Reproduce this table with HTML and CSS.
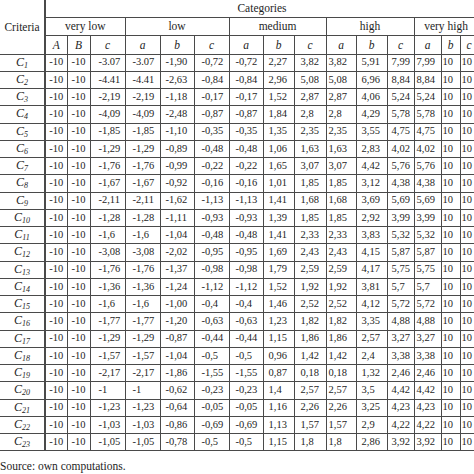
FILE: index.html
```html
<!DOCTYPE html>
<html>
<head>
<meta charset="utf-8">
<link rel="stylesheet" href="styles.css">
</head>
<body>
<div class="page">
<table class="grid">
<colgroup>
<col class="w45"><col class="w22"><col class="w23"><col class="w35"><col class="w35"><col class="w34"><col class="w35"><col class="w34"><col class="w31"><col class="w32"><col class="w30"><col class="w31"><col class="w27"><col class="w27"><col class="w19"><col class="w18">
</colgroup>
<thead>
<tr class="h1"><th rowspan="3" class="crit">Criteria</th><th colspan="15" class="cat">Categories</th></tr>
<tr class="h2"><th colspan="3">very low</th><th colspan="3">low</th><th colspan="3">medium</th><th colspan="3">high</th><th colspan="3">very high</th></tr>
<tr class="h3"><th>A</th><th>B</th><th>c</th><th>a</th><th>b</th><th>c</th><th>a</th><th>b</th><th>c</th><th>a</th><th>b</th><th>c</th><th>a</th><th>b</th><th>c</th></tr>
</thead>
<tbody>
<tr><th>C<sub>1</sub></th><td>-10</td><td>-10</td><td>-3.07</td><td>-3.07</td><td>-1,90</td><td>-0,72</td><td>-0,72</td><td>2,27</td><td>3,82</td><td>3,82</td><td>5,91</td><td>7,99</td><td>7,99</td><td>10</td><td>10</td></tr>
<tr><th>C<sub>2</sub></th><td>-10</td><td>-10</td><td>-4.41</td><td>-4.41</td><td>-2,63</td><td>-0,84</td><td>-0,84</td><td>2,96</td><td>5,08</td><td>5,08</td><td>6,96</td><td>8,84</td><td>8,84</td><td>10</td><td>10</td></tr>
<tr><th>C<sub>3</sub></th><td>-10</td><td>-10</td><td>-2,19</td><td>-2,19</td><td>-1,18</td><td>-0,17</td><td>-0,17</td><td>1,52</td><td>2,87</td><td>2,87</td><td>4,06</td><td>5,24</td><td>5,24</td><td>10</td><td>10</td></tr>
<tr><th>C<sub>4</sub></th><td>-10</td><td>-10</td><td>-4,09</td><td>-4,09</td><td>-2,48</td><td>-0,87</td><td>-0,87</td><td>1,84</td><td>2,8</td><td>2,8</td><td>4,29</td><td>5,78</td><td>5,78</td><td>10</td><td>10</td></tr>
<tr><th>C<sub>5</sub></th><td>-10</td><td>-10</td><td>-1,85</td><td>-1,85</td><td>-1,10</td><td>-0,35</td><td>-0,35</td><td>1,35</td><td>2,35</td><td>2,35</td><td>3,55</td><td>4,75</td><td>4,75</td><td>10</td><td>10</td></tr>
<tr><th>C<sub>6</sub></th><td>-10</td><td>-10</td><td>-1,29</td><td>-1,29</td><td>-0,89</td><td>-0,48</td><td>-0,48</td><td>1,06</td><td>1,63</td><td>1,63</td><td>2,83</td><td>4,02</td><td>4,02</td><td>10</td><td>10</td></tr>
<tr><th>C<sub>7</sub></th><td>-10</td><td>-10</td><td>-1,76</td><td>-1,76</td><td>-0,99</td><td>-0,22</td><td>-0,22</td><td>1,65</td><td>3,07</td><td>3,07</td><td>4,42</td><td>5,76</td><td>5,76</td><td>10</td><td>10</td></tr>
<tr><th>C<sub>8</sub></th><td>-10</td><td>-10</td><td>-1,67</td><td>-1,67</td><td>-0,92</td><td>-0,16</td><td>-0,16</td><td>1,01</td><td>1,85</td><td>1,85</td><td>3,12</td><td>4,38</td><td>4,38</td><td>10</td><td>10</td></tr>
<tr><th>C<sub>9</sub></th><td>-10</td><td>-10</td><td>-2,11</td><td>-2,11</td><td>-1,62</td><td>-1,13</td><td>-1,13</td><td>1,41</td><td>1,68</td><td>1,68</td><td>3,69</td><td>5,69</td><td>5,69</td><td>10</td><td>10</td></tr>
<tr><th>C<sub>10</sub></th><td>-10</td><td>-10</td><td>-1,28</td><td>-1,28</td><td>-1,11</td><td>-0,93</td><td>-0,93</td><td>1,39</td><td>1,85</td><td>1,85</td><td>2,92</td><td>3,99</td><td>3,99</td><td>10</td><td>10</td></tr>
<tr><th>C<sub>11</sub></th><td>-10</td><td>-10</td><td>-1,6</td><td>-1,6</td><td>-1,04</td><td>-0,48</td><td>-0,48</td><td>1,41</td><td>2,33</td><td>2,33</td><td>3,83</td><td>5,32</td><td>5,32</td><td>10</td><td>10</td></tr>
<tr><th>C<sub>12</sub></th><td>-10</td><td>-10</td><td>-3,08</td><td>-3,08</td><td>-2,02</td><td>-0,95</td><td>-0,95</td><td>1,69</td><td>2,43</td><td>2,43</td><td>4,15</td><td>5,87</td><td>5,87</td><td>10</td><td>10</td></tr>
<tr><th>C<sub>13</sub></th><td>-10</td><td>-10</td><td>-1,76</td><td>-1,76</td><td>-1,37</td><td>-0,98</td><td>-0,98</td><td>1,79</td><td>2,59</td><td>2,59</td><td>4,17</td><td>5,75</td><td>5,75</td><td>10</td><td>10</td></tr>
<tr><th>C<sub>14</sub></th><td>-10</td><td>-10</td><td>-1,36</td><td>-1,36</td><td>-1,24</td><td>-1,12</td><td>-1,12</td><td>1,52</td><td>1,92</td><td>1,92</td><td>3,81</td><td>5,7</td><td>5,7</td><td>10</td><td>10</td></tr>
<tr><th>C<sub>15</sub></th><td>-10</td><td>-10</td><td>-1,6</td><td>-1,6</td><td>-1,00</td><td>-0,4</td><td>-0,4</td><td>1,46</td><td>2,52</td><td>2,52</td><td>4,12</td><td>5,72</td><td>5,72</td><td>10</td><td>10</td></tr>
<tr><th>C<sub>16</sub></th><td>-10</td><td>-10</td><td>-1,77</td><td>-1,77</td><td>-1,20</td><td>-0,63</td><td>-0,63</td><td>1,23</td><td>1,82</td><td>1,82</td><td>3,35</td><td>4,88</td><td>4,88</td><td>10</td><td>10</td></tr>
<tr><th>C<sub>17</sub></th><td>-10</td><td>-10</td><td>-1,29</td><td>-1,29</td><td>-0,87</td><td>-0,44</td><td>-0,44</td><td>1,15</td><td>1,86</td><td>1,86</td><td>2,57</td><td>3,27</td><td>3,27</td><td>10</td><td>10</td></tr>
<tr><th>C<sub>18</sub></th><td>-10</td><td>-10</td><td>-1,57</td><td>-1,57</td><td>-1,04</td><td>-0,5</td><td>-0,5</td><td>0,96</td><td>1,42</td><td>1,42</td><td>2,4</td><td>3,38</td><td>3,38</td><td>10</td><td>10</td></tr>
<tr><th>C<sub>19</sub></th><td>-10</td><td>-10</td><td>-2,17</td><td>-2,17</td><td>-1,86</td><td>-1,55</td><td>-1,55</td><td>0,87</td><td>0,18</td><td>0,18</td><td>1,32</td><td>2,46</td><td>2,46</td><td>10</td><td>10</td></tr>
<tr><th>C<sub>20</sub></th><td>-10</td><td>-10</td><td>-1</td><td>-1</td><td>-0,62</td><td>-0,23</td><td>-0,23</td><td>1,4</td><td>2,57</td><td>2,57</td><td>3,5</td><td>4,42</td><td>4,42</td><td>10</td><td>10</td></tr>
<tr><th>C<sub>21</sub></th><td>-10</td><td>-10</td><td>-1,23</td><td>-1,23</td><td>-0,64</td><td>-0,05</td><td>-0,05</td><td>1,16</td><td>2,26</td><td>2,26</td><td>3,25</td><td>4,23</td><td>4,23</td><td>10</td><td>10</td></tr>
<tr><th>C<sub>22</sub></th><td>-10</td><td>-10</td><td>-1,03</td><td>-1,03</td><td>-0,86</td><td>-0,69</td><td>-0,69</td><td>1,13</td><td>1,57</td><td>1,57</td><td>2,9</td><td>4,22</td><td>4,22</td><td>10</td><td>10</td></tr>
<tr><th>C<sub>23</sub></th><td>-10</td><td>-10</td><td>-1,05</td><td>-1,05</td><td>-0,78</td><td>-0,5</td><td>-0,5</td><td>1,15</td><td>1,8</td><td>1,8</td><td>2,86</td><td>3,92</td><td>3,92</td><td>10</td><td>10</td></tr>
</tbody>
</table>
<p class="source">Source: own computations.</p>
</div>
</body>
</html>
```
FILE: styles.css
```css
html, body {
  margin: 0;
  padding: 0;
  background: #fff;
  overflow: hidden;
}
.page {
  width: 478px;
  font-family: "Liberation Serif", "Times New Roman", serif;
  color: #1e1e1e;
}
.grid {
  border-collapse: collapse;
  table-layout: fixed;
  width: 478px;
}
.w45 { width: 45px; }
.w22 { width: 22px; }
.w23 { width: 23px; }
.w35 { width: 35px; }
.w34 { width: 34px; }
.w31 { width: 31px; }
.w32 { width: 32px; }
.w30 { width: 30px; }
.w27 { width: 27px; }
.w19 { width: 19px; }
.w18 { width: 18px; }

.grid th, .grid td {
  padding: 0;
  border: 1px solid #4a4a4a;
  white-space: nowrap;
  overflow: hidden;
}
.grid thead th {
  font-weight: normal;
  font-size: 11.5px;
  text-align: center;
}
.grid .h1 th { border-top: none; }
.grid .h1 { height: 17px; }
.grid .h2 { height: 18px; }
.grid .h3 { height: 19px; }
.grid .h3 th {
  font-style: italic;
  font-size: 11.5px;
}
.grid .crit {
  border-left: none;
  border-right: 2px solid #4a4a4a;
}
.grid .cat {
  border-right: none;
}
.grid tbody tr { height: 17.26px; }
.grid tbody th {
  border-left: none;
  border-right: 2px solid #4a4a4a;
  font-weight: normal;
  font-style: italic;
  font-size: 12px;
  text-align: center;
  line-height: 1;
}
.grid tbody th sub {
  font-size: 8px;
  vertical-align: -2px;
}
.grid tbody td {
  font-size: 10.5px;
  line-height: 1;
  text-align: left;
}
.grid tbody td:nth-child(2),
.grid tbody td:nth-child(3) { text-align: center; }
.grid tbody td:nth-child(4) { padding-left: 8px; }
.grid tbody td:nth-child(5) { padding-left: 7px; }
.grid tbody td:nth-child(6) { padding-left: 5px; }
.grid tbody td:nth-child(7) { padding-left: 7px; }
.grid tbody td:nth-child(8) { padding-left: 6px; }
.grid tbody td:nth-child(9) { padding-left: 5px; }
.grid tbody td:nth-child(10) { padding-left: 6px; }
.grid tbody td:nth-child(11) { padding-left: 2px; }
.grid tbody td:nth-child(12) { padding-left: 5px; }
.grid tbody td:nth-child(13) { padding-left: 4px; }
.grid tbody td:nth-child(14) { padding-left: 2px; }
.grid tbody td:nth-child(15) { padding-left: 1px; }
.grid tbody td:nth-child(16) { padding-left: 1px; }
.grid tbody td:last-child { border-right: none; }
.source {
  margin: 9px 0 0 0;
  font-size: 11.5px;
  line-height: 13px;
}
```
